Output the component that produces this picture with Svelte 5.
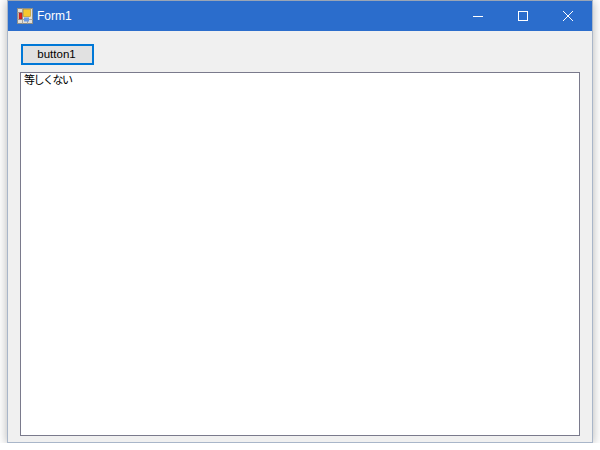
<script>
  let title = 'Form1';
  let buttonLabel = 'button1';
  let text = '等しくない';
</script>

<div class="window">
  <div class="titlebar">
    <svg class="app-icon" width="16" height="16" viewBox="0 0 16 16">
      <rect x="0.5" y="0.5" width="15" height="15" fill="#e4e0d8" stroke="#8f8f88" />
      <path d="M0.5 4.5H5.5M0.5 11.5H15.5M5.5 0.5V15.5M10.5 11.5V15.5" stroke="#a5a59e" fill="none" />
      <rect x="2" y="5" width="3" height="6" fill="#dc2420" stroke="#94201c" stroke-width="0.5" />
      <rect x="6.5" y="1.5" width="7" height="7" fill="#f6c72f" stroke="#b9921f" stroke-width="0.6" />
      <rect x="7" y="9.5" width="5" height="4" fill="#6a9ae6" />
    </svg>
    <span class="title">{title}</span>
    <div class="controls">
      <div class="control">
        <svg width="10" height="10" viewBox="0 0 10 10"><path d="M0 5.5H10" stroke="#fff" fill="none" /></svg>
      </div>
      <div class="control">
        <svg width="10" height="10" viewBox="0 0 10 10"><rect x="0.5" y="0.5" width="9" height="9" stroke="#fff" fill="none" /></svg>
      </div>
      <div class="control">
        <svg width="10" height="10" viewBox="0 0 10 10"><path d="M0 0L10 10M10 0L0 10" stroke="#fff" fill="none" /></svg>
      </div>
    </div>
  </div>
  <div class="client">
    <button class="btn">{buttonLabel}</button>
    <div class="textbox">{text}</div>
  </div>
</div>

<style>
  :global(body) {
    margin: 0;
    background: #fff;
  }

  .window {
    box-sizing: border-box;
    width: 586px;
    height: 443px;
    margin-left: 7px;
    display: flex;
    flex-direction: column;
    background: #f0f0f0;
    border: 1px solid #a9b6c9;
    border-top-color: #9aa5b5;
    box-shadow: 0 1px 10px rgba(0, 0, 0, 0.3);
  }

  .titlebar {
    height: 30px;
    flex: none;
    display: flex;
    align-items: center;
    background: #2b6dcc;
    color: #fff;
    padding: 0 2px 0 9px;
  }

  .app-icon {
    flex: none;
  }

  .title {
    margin-left: 4px;
    font: 12px "Liberation Sans", sans-serif;
  }

  .controls {
    margin-left: auto;
    display: flex;
    align-self: stretch;
  }

  .control {
    width: 45px;
    display: flex;
    align-items: center;
    justify-content: center;
  }

  .client {
    flex: 1;
    min-height: 0;
    display: flex;
    flex-direction: column;
    align-items: flex-start;
    padding: 13px 12px 6px 12px;
    gap: 7px;
  }

  .btn {
    box-sizing: border-box;
    width: 73px;
    height: 21px;
    margin-left: 1px;
    padding: 0 2px 0 0;
    background: #e1e1e1;
    border: 2px solid #0078d7;
    border-radius: 0;
    color: #000;
    font: 11.5px "Liberation Sans", sans-serif;
    line-height: 17px;
  }

  .textbox {
    box-sizing: border-box;
    flex: 1;
    width: 560px;
    background: #fff;
    border: 1px solid #7a7a8c;
    padding: 0 0 0 3px;
    color: #000;
    font: 11px/13px "Noto Sans CJK JP", sans-serif;
    letter-spacing: -1.5px;
  }
</style>
